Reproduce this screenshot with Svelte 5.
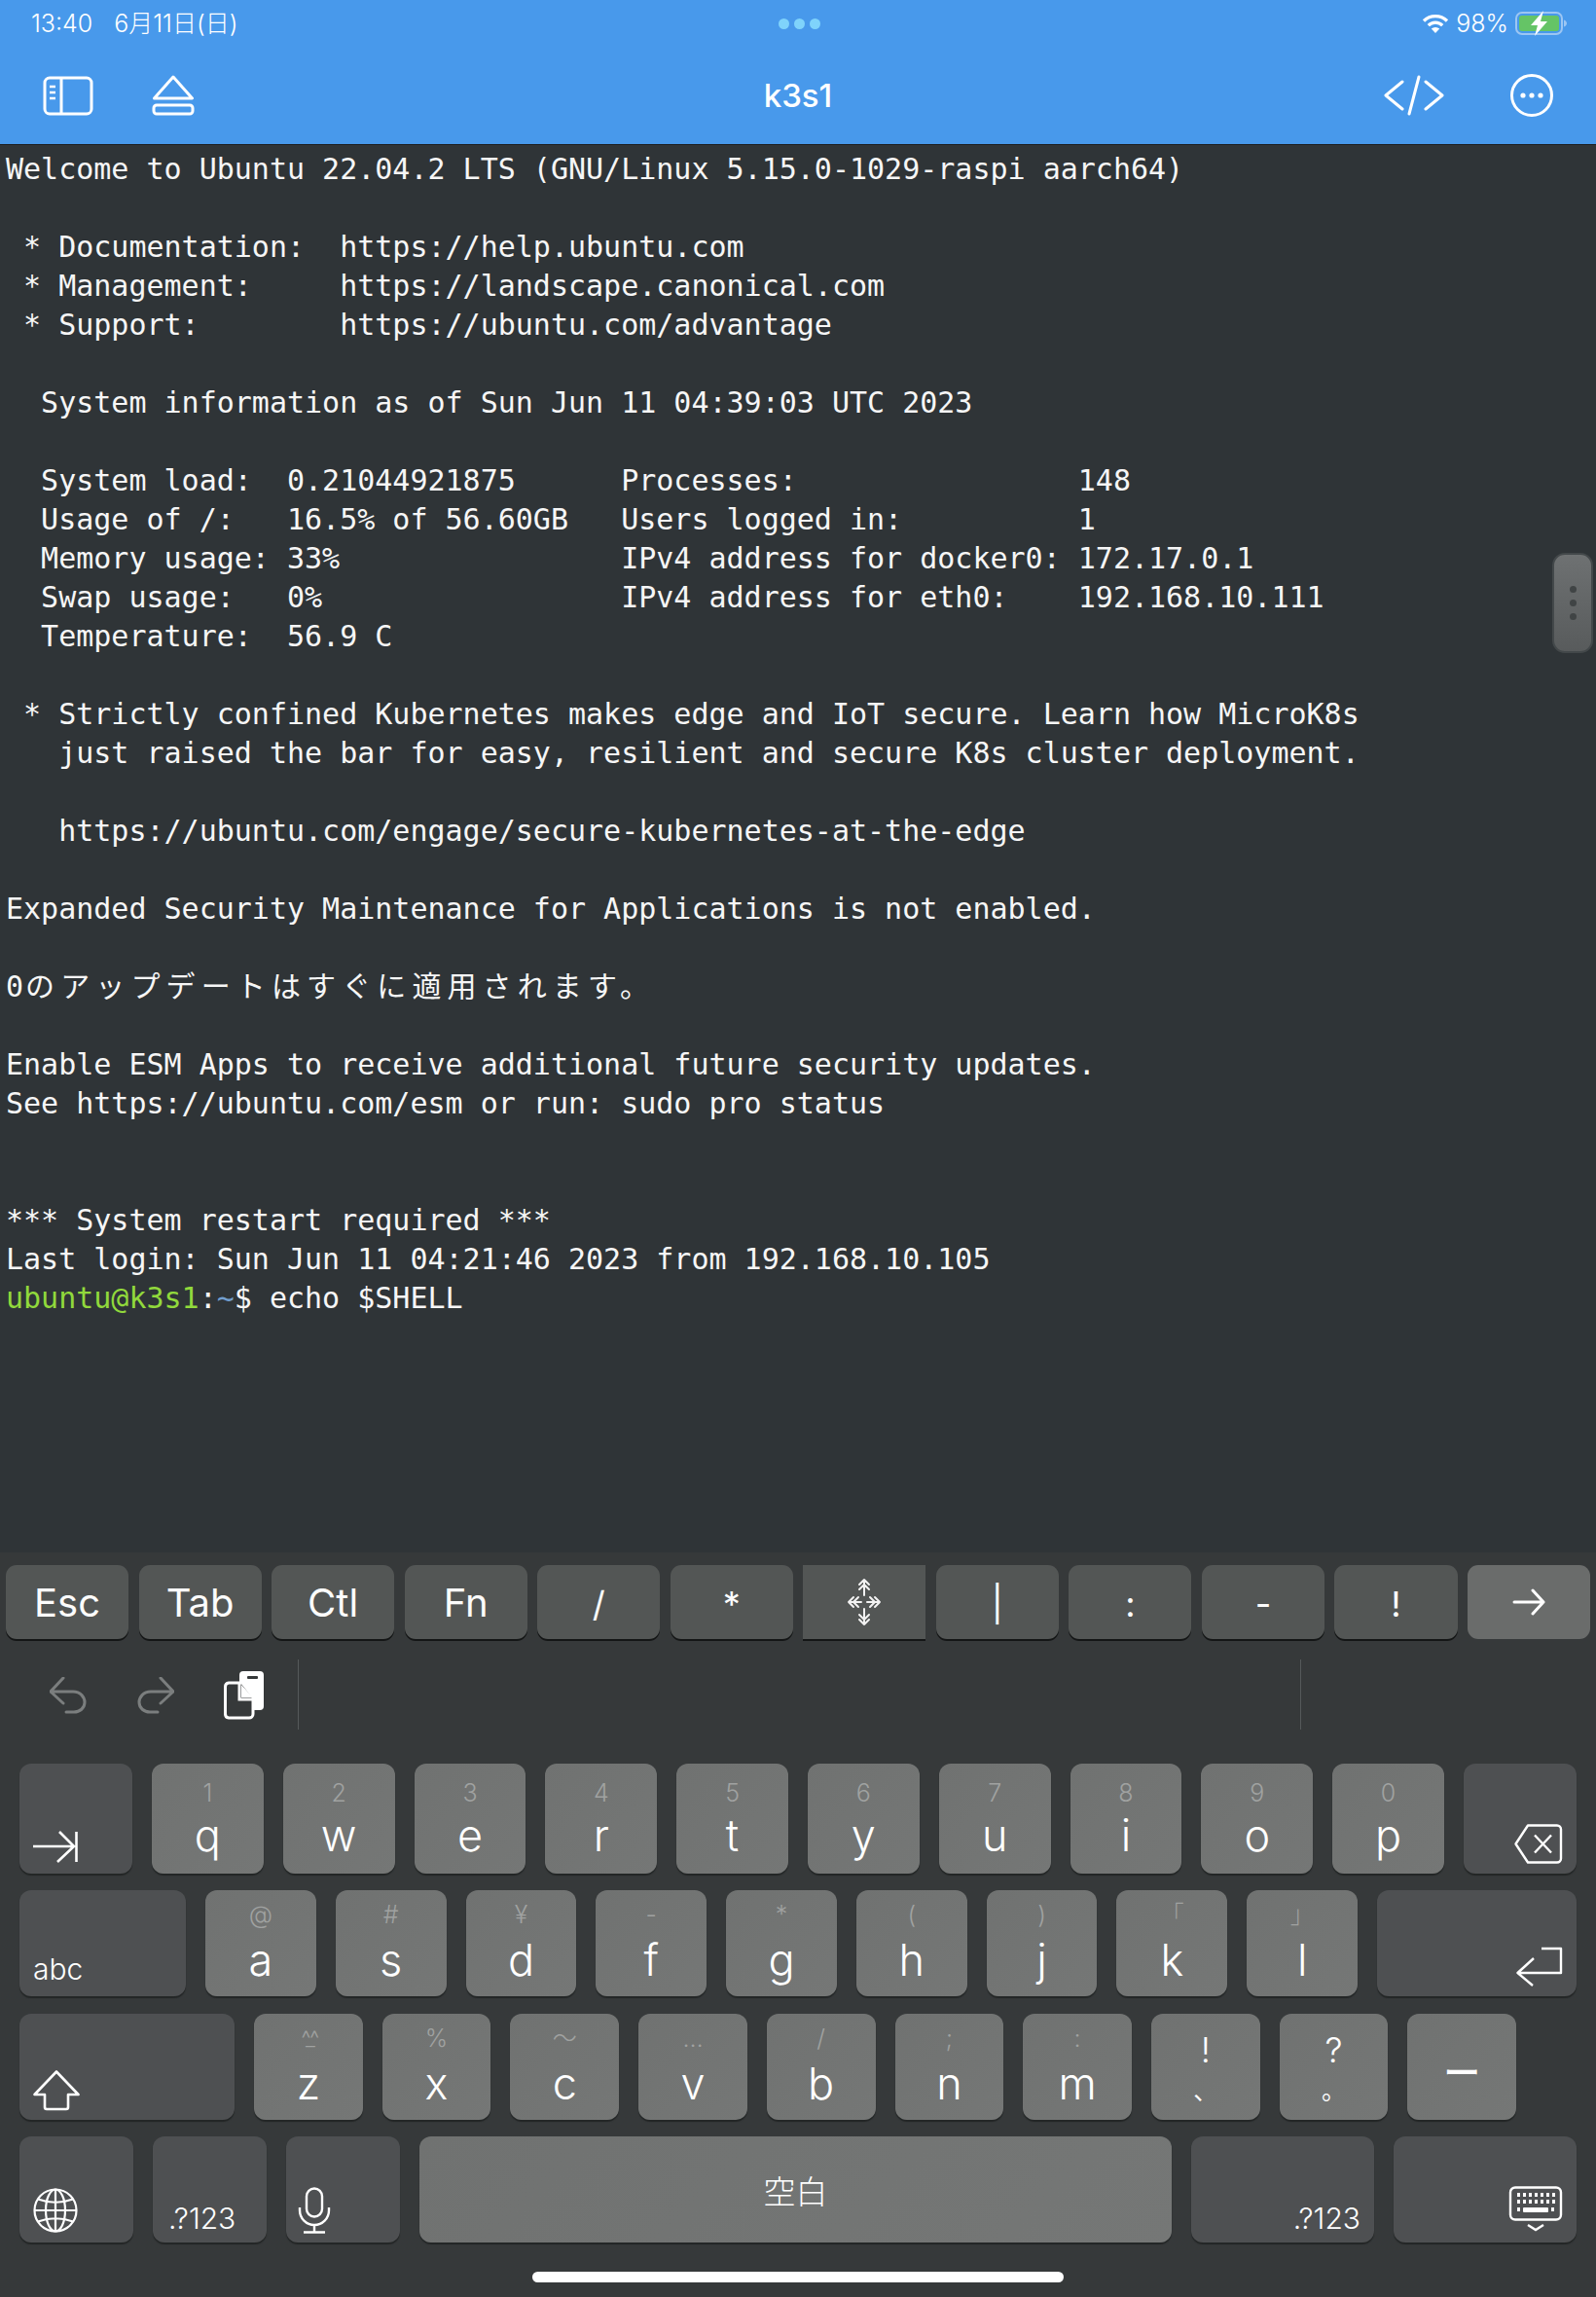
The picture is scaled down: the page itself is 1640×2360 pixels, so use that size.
<script>
  const motd = `Welcome to Ubuntu 22.04.2 LTS (GNU/Linux 5.15.0-1029-raspi aarch64)

 * Documentation:  https://help.ubuntu.com
 * Management:     https://landscape.canonical.com
 * Support:        https://ubuntu.com/advantage

  System information as of Sun Jun 11 04:39:03 UTC 2023

  System load:  0.21044921875      Processes:                148
  Usage of /:   16.5% of 56.60GB   Users logged in:          1
  Memory usage: 33%                IPv4 address for docker0: 172.17.0.1
  Swap usage:   0%                 IPv4 address for eth0:    192.168.10.111
  Temperature:  56.9 C

 * Strictly confined Kubernetes makes edge and IoT secure. Learn how MicroK8s
   just raised the bar for easy, resilient and secure K8s cluster deployment.

   https://ubuntu.com/engage/secure-kubernetes-at-the-edge

Expanded Security Maintenance for Applications is not enabled.

`;

  const motd2 = `
Enable ESM Apps to receive additional future security updates.
See https://ubuntu.com/esm or run: sudo pro status


*** System restart required ***
Last login: Sun Jun 11 04:21:46 2023 from 192.168.10.105
`;

  const accessoryLeft = ['Esc', 'Tab', 'Ctl', 'Fn', '/', '*'];
  const accessoryRight = ['|', ':', '-', '!'];

  const row1 = [['1','q'],['2','w'],['3','e'],['4','r'],['5','t'],['6','y'],['7','u'],['8','i'],['9','o'],['0','p']];
  const row2 = [['@','a'],['#','s'],['¥','d'],['-','f'],['*','g'],['(','h'],[')','j'],['「','k'],['」','l']];
  const row3 = [['^_^','z'],['%','x'],['〜','c'],['…','v'],['/','b'],[';','n'],[':','m']];
</script>

<div class="ipad">
  <header class="header">
    <div class="status">
      <div class="clock"><span>13:40</span><span>6月11日(日)</span></div>
      <div class="dots"><i></i><i></i><i></i></div>
      <div class="sys">
        <svg class="wifi" width="28" height="20" viewBox="0 0 28 20" fill="none" stroke="#fff" stroke-width="3.2">
          <path d="M2 7.5A17 17 0 0 1 26 7.5" />
          <path d="M6.8 12.2A10 10 0 0 1 21.2 12.2" />
          <path d="M14 20L9.8 15.6A6 6 0 0 1 18.2 15.6Z" fill="#fff" stroke="none" />
        </svg>
        <span>98%</span>
        <svg width="54" height="26" viewBox="0 0 54 26" fill="none">
          <rect x="1" y="2" width="47" height="22" rx="6" stroke="#9cc6f3" stroke-width="2" />
          <rect x="4" y="5" width="41" height="16" rx="3" fill="#65c466" />
          <path d="M50 9.5c2 .6 3 2 3 3.5s-1 2.900-3 3.500z" fill="#9cc6f3" />
          <path d="M29 0L16 15h7l-3 11 13-15h-7z" fill="#fff" />
        </svg>
      </div>
    </div>
    <nav class="nav">
      <div class="left">
        <svg width="52" height="41" viewBox="0 0 52 41" fill="none" stroke="#fff" stroke-width="3">
          <rect x="2" y="2" width="48" height="37" rx="5" />
          <path d="M19 2V39" />
          <path d="M7 11h6M7 17h6M7 23h6" stroke-width="2.500" />
        </svg>
        <svg width="44" height="42" viewBox="0 0 44 42" fill="none" stroke="#fff" stroke-width="3" stroke-linejoin="round">
          <path d="M22 2L41.500 24H2.500Z" />
          <rect x="2" y="31" width="40" height="9" rx="3" />
        </svg>
      </div>
      <div class="title">k3s1</div>
      <div class="right">
        <svg width="62" height="42" viewBox="0 0 62 42" fill="none" stroke="#fff" stroke-width="3" stroke-linecap="round" stroke-linejoin="round">
          <path d="M19 7L2 21L19 35" />
          <path d="M43 7L60 21L43 35" />
          <path d="M36 2L26 40" />
        </svg>
        <svg width="44" height="44" viewBox="0 0 44 44" fill="none">
          <circle cx="22" cy="22" r="20.500" stroke="#fff" stroke-width="3" />
          <circle cx="13" cy="22" r="2.600" fill="#fff" />
          <circle cx="22" cy="22" r="2.600" fill="#fff" />
          <circle cx="31" cy="22" r="2.600" fill="#fff" />
        </svg>
      </div>
    </nav>
  </header>

  <main class="term">
    <pre>{motd}</pre>
    <pre class="ja-line">0<span class="ja">のアップデートはすぐに適用されます。</span></pre>
    <pre>{motd2}</pre>
    <pre><span class="green">ubuntu@k3s1</span>:<span class="blue">~</span>$ echo $SHELL</pre>
    <div class="handle"><i></i><i></i><i></i></div>
  </main>

  <section class="keyboard">
    <div class="accessory">
      {#each accessoryLeft as k}
        <div class="acc" class:sym={k.length === 1}>{k}</div>
      {/each}
      <div class="acc square">
        <svg width="36" height="50" viewBox="0 0 36 50" fill="none" stroke="#f2f2f2" stroke-width="2" stroke-linecap="round" stroke-linejoin="round">
          <path d="M18 2V18M13 7L18 2L23 7M13 12L18 7L23 12" />
          <path d="M18 32V48M13 43L18 48L23 43M13 38L18 43L23 38" />
          <path d="M2 25H15M7 20L2 25L7 30M12 20L7 25L12 30" />
          <path d="M21 25H34M29 20L34 25L29 30M24 20L29 25L24 30" />
        </svg>
      </div>
      {#each accessoryRight as k}
        <div class="acc sym">{k}</div>
      {/each}
      <div class="acc lit">
        <svg width="34" height="28" viewBox="0 0 34 28" fill="none" stroke="#fff" stroke-width="3" stroke-linecap="round" stroke-linejoin="round">
          <path d="M2 14H32M21 2L32 14L21 26" />
        </svg>
      </div>
    </div>

    <div class="tools">
      <svg class="undo" width="38" height="38" viewBox="0 0 38 38" fill="none" stroke="#7b7e7e" stroke-width="3" stroke-linecap="round" stroke-linejoin="round">
        <path d="M14 1L1 15L14 27M1 15H24C32 15 36 21 36 26C36 32 31 36 25 36H17" />
      </svg>
      <svg class="redo" width="38" height="38" viewBox="0 0 38 38" fill="none" stroke="#7b7e7e" stroke-width="3" stroke-linecap="round" stroke-linejoin="round">
        <path d="M24 1L37 15L24 27M37 15H14C6 15 2 21 2 26C2 32 7 36 13 36H21" />
      </svg>
      <svg class="paste" width="42" height="50" viewBox="0 0 42 50" fill="none">
        <rect x="16" y="0" width="25" height="40" rx="4" fill="#fff" />
        <rect x="24" y="5" width="11" height="3" rx="1" fill="#36393a" />
        <path d="M5 12H19L30 26V44A4 4 0 0 1 26 48H5A4 4 0 0 1 1.500 44V16A4 4 0 0 1 5 12Z" fill="#36393a" stroke="#fff" stroke-width="3" />
        <path d="M16 13V29H30" stroke="#fff" stroke-width="3" />
        <path d="M18 14L30 27H18Z" fill="#fff" />
      </svg>
      <span class="rule"></span>
      <span class="rule second"></span>
    </div>

    <div class="rows">
      <div class="row first">
        <div class="key dark tab">
          <svg width="46" height="34" viewBox="0 0 46 34" fill="none" stroke="#fff" stroke-width="2.600">
            <path d="M0 16H42M27 1L42 16L25 32M44.500 1V32" />
          </svg>
        </div>
        {#each row1 as [hint, letter]}
          <div class="key light">
            <span class="hint">{hint}</span>
            <span class="letter">{letter}</span>
          </div>
        {/each}
        <div class="key dark tab end">
          <svg width="50" height="41" viewBox="0 0 50 41" fill="none" stroke="#fff" stroke-width="2.400" stroke-linejoin="round">
            <path d="M14 1.500H44A4 4 0 0 1 48 5.500V35.500A4 4 0 0 1 44 39.500H14L1.500 20.500Z" />
            <path d="M21 11.500L38 29.500M38 11.500L21 29.500" />
          </svg>
        </div>
      </div>

      <div class="row">
        <div class="key dark abc"><span>abc</span></div>
        {#each row2 as [hint, letter]}
          <div class="key light raised">
            <span class="hint">{hint}</span>
            <span class="letter">{letter}</span>
          </div>
        {/each}
        <div class="key dark ret">
          <svg width="48" height="42" viewBox="0 0 48 42" fill="none" stroke="#fff" stroke-width="2.400" stroke-linejoin="round">
            <path d="M26 2H46V27H2M18 12L1.500 27L17 40" />
          </svg>
        </div>
      </div>

      <div class="row third">
        <div class="key dark shift">
          <svg width="48" height="42" viewBox="0 0 48 42" fill="none" stroke="#fff" stroke-width="2.600" stroke-linejoin="round">
            <path d="M24 1.500L46.500 25H36V38A2 2 0 0 1 34 40H14A2 2 0 0 1 12 38V25H1.500Z" />
          </svg>
        </div>
        {#each row3 as [hint, letter]}
          <div class="key light raised">
            <span class="hint" class:tight={hint.length > 1}>{hint}</span>
            <span class="letter">{letter}</span>
          </div>
        {/each}
        <div class="key light stack"><span>!</span><span class="ja-mark">、</span></div>
        <div class="key light stack"><span>?</span><span class="ja-mark">。</span></div>
        <div class="key light bar"><span>ー</span></div>
      </div>

      <div class="row">
        <div class="key dark w117 tab">
          <svg width="46" height="46" viewBox="0 0 46 46" fill="none" stroke="#fff" stroke-width="2.200">
            <circle cx="23" cy="23" r="21.500" />
            <ellipse cx="23" cy="23" rx="10" ry="21.500" />
            <path d="M23 1.500V44.500M1.500 23H44.500M5 11.500Q23 18 41 11.500M5 34.500Q23 28 41 34.500" />
          </svg>
        </div>
        <div class="key dark w117 num"><span>.?123</span></div>
        <div class="key dark w117 mic">
          <svg width="34" height="48" viewBox="0 0 34 48" fill="none" stroke="#fff" stroke-width="2.400">
            <rect x="9" y="1.500" width="16" height="29" rx="8" />
            <path d="M2 21V24A15 15 0 0 0 32 24V21M17 39V46.500M6 46.500H28" />
          </svg>
        </div>
        <div class="key light space"><span>空白</span></div>
        <div class="key dark w188 num end"><span>.?123</span></div>
        <div class="key dark w188 tab end">
          <svg width="56" height="48" viewBox="0 0 56 48" fill="none">
            <rect x="2" y="1.500" width="52" height="33" rx="5" stroke="#fff" stroke-width="2.400" />
            <path d="M9 9h3M15 9h3M21 9h3M27 9h3M33 9h3M39 9h3M45 9h3M9 16h3M15 16h3M21 16h3M27 16h3M33 16h3M39 16h3M45 16h3" stroke="#fff" stroke-width="4" />
            <rect x="15" y="22" width="26" height="5" rx="1" fill="#fff" />
            <path d="M9 24h3M44 24h3" stroke="#fff" stroke-width="4" />
            <path d="M20 40L28 45L36 40" stroke="#fff" stroke-width="2.400" />
          </svg>
        </div>
      </div>
    </div>

    <div class="home"></div>
  </section>
</div>

<style>
  :global(body) {
    margin: 0;
    background: #36393a;
  }

  .ipad {
    width: 1640px;
    height: 2360px;
    display: flex;
    flex-direction: column;
    overflow: hidden;
    font-family: Inter, "Noto Sans CJK JP", sans-serif;
    color: #fff;
  }

  .header {
    height: 148px;
    flex: none;
    background: #4899eb;
  }

  .status {
    height: 48px;
    padding: 0 29px 0 32px;
    display: grid;
    grid-template-columns: 1fr auto 1fr;
    align-items: center;
    font-size: 25px;
    line-height: 30px;
    font-weight: 300;
  }

  .clock {
    display: flex;
    align-items: baseline;
    gap: 22px;
  }

  .dots {
    display: flex;
    gap: 5px;
  }

  .dots i {
    width: 11px;
    height: 11px;
    border-radius: 50%;
    background: #7fd3fb;
  }

  .sys {
    display: flex;
    justify-content: flex-end;
    align-items: center;
    gap: 7px;
  }

  .sys svg {
    display: block;
  }

  .nav {
    height: 100px;
    padding: 0 44px;
    display: grid;
    grid-template-columns: 1fr auto 1fr;
    align-items: center;
  }

  .left,
  .right {
    display: flex;
    align-items: center;
  }

  .left {
    gap: 60px;
  }

  .right {
    justify-content: flex-end;
    gap: 68px;
  }

  .title {
    font-size: 33px;
    font-weight: 500;
  }

  .term {
    flex: 1;
    position: relative;
    background: #2f3437;
    border-top: 1px solid #1d2023;
    padding: 5px 0 0 6px;
    color: #f6f6f6;
  }

  pre {
    margin: 0;
    font-family: "DejaVu Sans Mono", "Noto Sans CJK JP", monospace;
    font-size: 30px;
    line-height: 40px;
    white-space: pre;
  }

  .ja-line {
    height: 40px;
  }

  .ja {
    font-family: "Noto Sans CJK JP", sans-serif;
    font-weight: 400;
    line-height: 30px;
    letter-spacing: 6.12px;
    margin-left: 2px;
  }

  .green {
    color: #91d93c;
  }

  .blue {
    color: #729fcf;
  }

  .handle {
    position: absolute;
    left: 1595px;
    top: 419px;
    width: 42px;
    height: 103px;
    box-sizing: border-box;
    border: 2px solid #43484a;
    border-radius: 13px;
    background: linear-gradient(#6e7172, #585b5c);
    display: flex;
    flex-direction: column;
    align-items: center;
    justify-content: center;
    gap: 7px;
  }

  .handle i {
    width: 7px;
    height: 7px;
    border-radius: 50%;
    background: #404445;
  }

  .keyboard {
    height: 765px;
    flex: none;
    box-sizing: border-box;
    padding-top: 13px;
    background: #36393a;
  }

  .accessory {
    height: 76px;
    padding: 0 6px;
    display: flex;
    gap: 10.5px;
  }

  .acc {
    flex: 1;
    display: flex;
    align-items: center;
    justify-content: center;
    font-size: 40px;
    font-weight: 400;
    color: #fcfcfc;
    background: #535655;
    border-radius: 11px;
    box-shadow: 0 2px 0 #141616;
  }

  .acc.sym {
    font-size: 36px;
    padding-top: 3px;
    box-sizing: border-box;
  }

  .acc.square {
    border-radius: 0;
  }

  .acc.lit {
    background: #6a6c6b;
    box-shadow: none;
  }

  .tools {
    height: 128px;
    box-sizing: border-box;
    padding: 21px 0 0 51px;
    display: flex;
    align-items: flex-start;
  }

  .undo,
  .redo {
    margin-top: 18px;
  }

  .redo {
    margin-left: 52px;
  }

  .paste {
    margin-top: 12px;
    margin-left: 51px;
  }

  .rule {
    width: 1px;
    height: 72px;
    margin-left: 34px;
    background: #55595a;
  }

  .rule.second {
    margin-left: 1029px;
  }

  .rows {
    padding: 0 20px;
  }

  .row {
    height: 109px;
    display: flex;
    gap: 20px;
    margin-top: 17px;
  }

  .row.first {
    height: 113px;
    margin-top: 0;
  }

  .row.third {
    margin-top: 18px;
    padding-right: 62px;
  }

  .key {
    min-width: 0;
    box-sizing: border-box;
    border-radius: 12px;
    display: flex;
    flex-direction: column;
  }

  .light {
    flex: 1;
    align-items: center;
    background: linear-gradient(135deg, #707271, #757776);
    box-shadow: 0 2px 1px #232626;
  }

  .dark {
    flex: none;
    justify-content: flex-end;
    background: #4e5052;
    box-shadow: 0 2px 1px #232626;
  }

  .hint {
    height: 34px;
    margin-top: 13px;
    font-size: 25px;
    line-height: 34px;
    font-weight: 300;
    color: #a0a2a1;
  }

  .hint.tight {
    font-size: 22px;
    letter-spacing: -4px;
  }

  .raised .hint {
    height: 37px;
    margin-top: 8px;
  }

  .letter {
    font-size: 45px;
    line-height: 54px;
    font-weight: 300;
  }

  .tab {
    width: 116px;
    padding: 0 0 10px 14px;
  }

  .tab.end {
    align-items: flex-end;
    padding: 0 14px 10px 0;
  }

  .abc {
    width: 171px;
    padding: 0 0 10px 14px;
    font-size: 30px;
    font-weight: 300;
  }

  .ret {
    width: 205px;
    align-items: flex-end;
    padding: 0 14px 9px 0;
  }

  .shift {
    width: 221px;
    padding: 0 0 9px 14px;
  }

  .stack {
    justify-content: flex-start;
    padding-top: 17px;
    font-size: 36px;
    line-height: 40px;
    font-weight: 300;
  }

  .ja-mark {
    font-family: "Noto Sans CJK JP", sans-serif;
    font-size: 25px;
    font-weight: 400;
    line-height: 40px;
  }

  .bar {
    justify-content: center;
    padding-top: 5px;
    font-family: "Noto Sans CJK JP", sans-serif;
    font-size: 38px;
    font-weight: 500;
  }

  .w117 {
    width: 117px;
  }

  .w188 {
    width: 188px;
  }

  .num {
    padding: 0 0 7px 16px;
    font-size: 30px;
    font-weight: 300;
  }

  .num.end {
    align-items: flex-end;
    padding: 0 14px 7px 0;
  }

  .mic {
    padding: 0 0 9px 12px;
  }

  .space {
    justify-content: center;
    font-family: "Noto Sans CJK JP", sans-serif;
    font-size: 33px;
    font-weight: 300;
  }

  .home {
    width: 546px;
    height: 11px;
    margin: 30px auto 0;
    border-radius: 6px;
    background: #fff;
  }
</style>
